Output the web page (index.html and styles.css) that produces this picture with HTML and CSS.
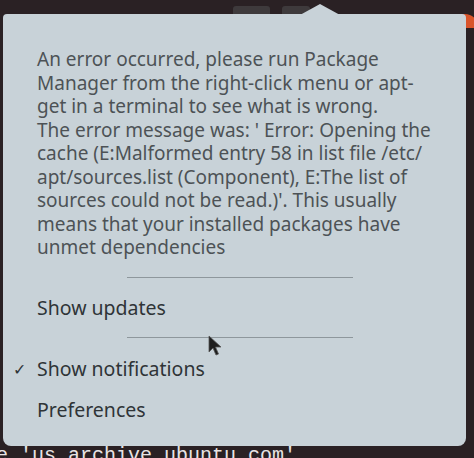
FILE: index.html
```html
<!DOCTYPE html>
<html>
<head>
<meta charset="utf-8">
<link rel="stylesheet" href="styles.css">
</head>
<body>
<div class="screen">
  <div class="topbar">
    <div class="tab tab-a"><span class="tab-icon"></span></div>
    <div class="tab tab-b"></div>
    <div class="orange"></div>
  </div>
  <div class="menu">
    <p class="message">An error occurred, please run Package<br>Manager from the right-click menu or apt-<br>get in a terminal to see what is wrong.<br>The error message was: ' Error: Opening the<br>cache (E:Malformed entry 58 in list file /etc/<br>apt/sources.list (Component), E:The list of<br>sources could not be read.)'. This usually<br>means that your installed packages have<br>unmet dependencies</p>
    <div class="sep"></div>
    <div class="item">Show updates</div>
    <div class="sep sep2"></div>
    <div class="item"><span class="check">✓</span>Show notifications</div>
    <div class="item">Preferences</div>
    <svg class="cursor" width="14" height="22" viewBox="0 0 14 22"><path d="M1 1 L1 17 L5 13 L8 20 L10.5 19 L7.5 12 L13 12 Z" fill="#1e1e1e" stroke="#555" stroke-width="0.8"/></svg>
  </div>
  <div class="terminal">e 'us.archive.ubuntu.com'</div>
</div>
</body>
</html>
```
FILE: styles.css
```css
html, body {
  margin: 0;
  padding: 0;
  background: #2a2124;
}
.screen {
  width: 474px;
  height: 458px;
  overflow: hidden;
  background: #2a2124;
  position: relative;
}
.topbar {
  height: 14px;
  display: flex;
  align-items: flex-start;
  padding-left: 233px;
  gap: 12px;
}
.tab {
  margin-top: 6px;
  height: 12px;
  background: #3e3a3c;
  border-radius: 3px 3px 0 0;
}
.tab-a { width: 37px; display: flex; justify-content: center; }
.tab-b { width: 28px; }
.tab-icon {
  margin-top: 8px;
  width: 10px;
  height: 6px;
  border: 2px solid #d8d8d8;
  border-bottom: none;
  border-radius: 6px 6px 0 0;
}
.orange {
  margin-left: auto;
  margin-top: 14px;
  width: 26px;
  height: 14px;
  background: #d9542a;
  border-radius: 13px 13px 0 0;
  margin-right: -4px;
}
.menu {
  position: relative;
  margin-left: 3px;
  width: 463px;
  height: 432px;
  background: #c8d2d8;
  border-radius: 4px 4px 8px 8px;
  box-sizing: border-box;
  padding-top: 34px;
}
.menu::before {
  content: "";
  position: absolute;
  left: 297px;
  top: -10px;
  border-left: 20px solid transparent;
  border-right: 20px solid transparent;
  border-bottom: 11px solid #c8d2d8;
}
.message {
  margin: 0;
  padding-left: 34px;
  font-family: "Noto Sans", sans-serif;
  font-size: 19px;
  line-height: 23.5px;
  color: #4d5256;
  white-space: nowrap;
}
.sep {
  margin: 17px 0 0 124px;
  width: 226px;
  height: 1px;
  background: #8e979c;
}
.sep2 {
  margin-top: 17px;
}
.item {
  position: relative;
  padding-left: 34px;
  font-family: "Noto Sans", sans-serif;
  font-size: 19.5px;
  line-height: 24px;
  color: #2f3437;
  margin-top: 18px;
}
.sep2 + .item { margin-top: 19px; }
.item + .item { margin-top: 17px; }
.check {
  position: absolute;
  left: 10px;
  font-size: 16px;
}
.cursor {
  position: absolute;
  left: 205px;
  top: 321px;
}
.terminal {
  margin-top: 2px;
  font-family: "Liberation Mono", monospace;
  font-size: 20px;
  line-height: 16px;
  color: #e8e4e4;
  text-indent: -4px;
  white-space: nowrap;
}
```
